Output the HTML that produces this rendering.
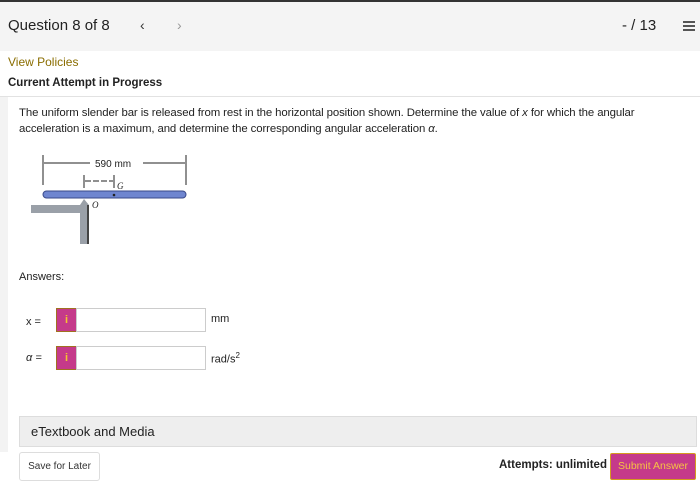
<!DOCTYPE html>
<html><head><style>
body{margin:0;width:700px;height:484px;overflow:hidden;background:#fff;font-family:"Liberation Sans",sans-serif;color:#222;position:relative}
.a{position:absolute}
</style></head><body>
<div class="a" style="left:0;top:0;width:700px;height:2px;background:#333"></div>
<div class="a" style="left:0;top:2px;width:700px;height:49px;background:#f4f4f4"></div>
<div class="a" style="left:8px;top:17px;font-size:15px;color:#222">Question 8 of 8</div>
<div class="a" style="left:140px;top:17px;font-size:14px;color:#333">‹</div>
<div class="a" style="left:177px;top:17px;font-size:14px;color:#999">›</div>
<div class="a" style="left:622px;top:17px;font-size:15px;color:#222">- / 13</div>
<div class="a" style="left:683px;top:21px;width:12px;height:2px;background:#555;box-shadow:0 4px 0 #555,0 8px 0 #555"></div>
<div class="a" style="left:8px;top:55px;font-size:12px;color:#8a6d00">View Policies</div>
<div class="a" style="left:8px;top:77px;font-size:11.5px;font-weight:bold;color:#222">Current Attempt in Progress</div>
<div class="a" style="left:0;top:96px;width:700px;height:1px;background:#e2e2e2"></div>
<div class="a" style="left:0;top:97px;width:8px;height:355px;background:#f3f3f3"></div>
<div class="a" style="left:19px;top:105px;font-size:11.4px;line-height:16px;width:670px;color:#222;letter-spacing:-0.1px">The uniform slender bar is released from rest in the horizontal position shown. Determine the value of <i>x</i> for which the angular acceleration is a maximum, and determine the corresponding angular acceleration <i>α</i>.</div>
<svg class="a" style="left:0;top:140px" width="260" height="110">
<line x1="43" y1="15" x2="43" y2="45" stroke="#222"/><line x1="186" y1="15" x2="186" y2="45" stroke="#222"/>
<line x1="44" y1="23" x2="90" y2="23" stroke="#222"/><line x1="143" y1="23" x2="185" y2="23" stroke="#222"/>
<text x="95" y="27" font-size="10" font-family="Liberation Sans" fill="#222">590 mm</text>
<line x1="84" y1="35" x2="84" y2="48" stroke="#222"/><line x1="114" y1="35" x2="114" y2="48" stroke="#222"/>
<line x1="85" y1="41" x2="113" y2="41" stroke="#222" stroke-dasharray="6 2"/>
<text x="117" y="49" font-size="9" font-style="italic" font-family="Liberation Serif" fill="#222">G</text>
<rect x="43" y="51" width="143" height="7" rx="3.5" fill="#6f86d0" stroke="#3a4a8a"/>
<circle cx="114" cy="55" r="1.3" fill="#222"/>
<polygon points="31,65 80,65 84,59 89,65 89,104 80,104 80,73 31,73" fill="#9aa0a8"/>
<line x1="88" y1="65" x2="88" y2="104" stroke="#444" stroke-width="2"/>
<text x="92" y="68" font-size="9" font-style="italic" font-family="Liberation Serif" fill="#222">O</text>
</svg>
<div class="a" style="left:19px;top:271px;font-size:11px">Answers:</div>
<div class="a" style="left:26px;top:316px;font-size:11px">x =</div>
<div class="a" style="left:26px;top:352px;font-size:11px;font-style:italic">α =</div>
<div class="a" style="left:56px;top:308px;width:19px;height:22px;background:#c53a8a;border:1px solid #a07020;color:#f4c430;font-size:11px;font-weight:bold;text-align:center;line-height:22px">i</div>
<div class="a" style="left:76px;top:308px;width:128px;height:22px;border:1px solid #ccc"></div>
<div class="a" style="left:56px;top:346px;width:19px;height:22px;background:#c53a8a;border:1px solid #a07020;color:#f4c430;font-size:11px;font-weight:bold;text-align:center;line-height:22px">i</div>
<div class="a" style="left:76px;top:346px;width:128px;height:22px;border:1px solid #ccc"></div>
<div class="a" style="left:211px;top:313px;font-size:11px">mm</div>
<div class="a" style="left:211px;top:351px;font-size:11px">rad/s<sup style="font-size:8px">2</sup></div>
<div class="a" style="left:19px;top:416px;width:676px;height:29px;background:#eeeeee;border:1px solid #ddd"></div>
<div class="a" style="left:31px;top:424px;font-size:13px">eTextbook and Media</div>
<div class="a" style="left:19px;top:452px;width:79px;height:27px;border:1px solid #ddd;border-radius:3px;font-size:10px;line-height:27px;text-align:center;color:#333">Save for Later</div>
<div class="a" style="left:499px;top:459px;font-size:11.5px;font-weight:bold">Attempts: unlimited</div>
<div class="a" style="left:610px;top:453px;width:84px;height:25px;background:#c53a8a;border:1px solid #d59a20;border-radius:2px;color:#f6c343;font-size:10.5px;line-height:25px;text-align:center">Submit Answer</div>
</body></html>
